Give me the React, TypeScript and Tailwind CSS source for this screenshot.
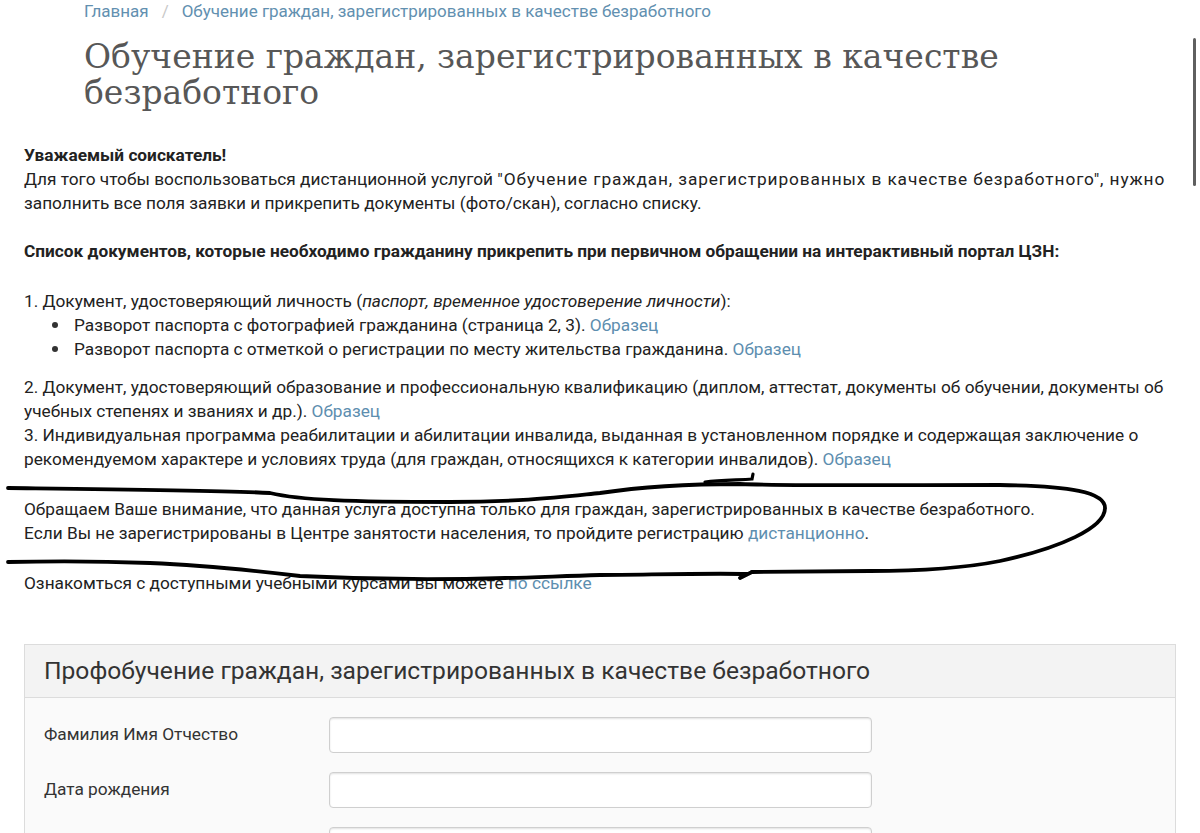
import React from "react";

const LINK = "text-[#5d8eaf]";

function Scribble() {
  return (
    <svg
      className="pointer-events-none absolute left-0 top-0"
      width={1200}
      height={833}
      viewBox="0 0 1200 833"
      fill="none"
    >
      <path
        d="M8 488 C 100 489 220 490 270 493 C 300 500 350 502 450 502 C 520 502 560 497 600 493 C 640 487 690 484 740 484 C 800 486 900 485 1000 485 C 1070 486 1105 492 1105 508 C 1105 528 1060 548 1000 561 C 960 569 920 571 870 571 L 752 572"
        stroke="#000"
        strokeWidth={3.8}
        strokeLinecap="round"
        strokeLinejoin="round"
      />
      <path
        d="M705 482 C 720 480 740 480 752 479 L 753 474"
        stroke="#000"
        strokeWidth={3.2}
        strokeLinecap="round"
      />
      <path
        d="M752 572 L 740 578 M 748 574 C 700 573 640 575 600 575 C 560 576 530 578 505 578 C 440 580 380 580 300 576 C 250 570 200 565 150 563 C 100 561 50 561 8 562"
        stroke="#000"
        strokeWidth={3.8}
        strokeLinecap="round"
        strokeLinejoin="round"
      />
    </svg>
  );
}

function FieldRow({ label }: { label: string }) {
  return (
    <div className="flex items-center">
      <label className="w-[285px] shrink-0 text-[17.3px] text-[#333]">{label}</label>
      <input
        type="text"
        className="h-[36px] w-[543px] rounded-[4px] border border-[#cfcfcf] bg-white shadow-[inset_0_1px_2px_rgba(0,0,0,0.12)]"
      />
    </div>
  );
}

function Bullet({ children }: { children: React.ReactNode }) {
  return (
    <li className="flex items-start">
      <span className="ml-[28px] mr-[16px] mt-[9px] h-[6px] w-[6px] shrink-0 rounded-full bg-[#333]" />
      <span>{children}</span>
    </li>
  );
}

export default function App() {
  return (
    <div
      className="relative h-[833px] w-[1200px] overflow-hidden bg-white text-[#222]"
      style={{ fontFamily: "Roboto, 'Liberation Sans', sans-serif" }}
    >
      <div className="pl-[84px]">
        <div className="flex items-center gap-[13px] text-[17px] leading-[22px] text-[#6290b0]">
          <span>Главная</span>
          <span className="text-[#c8c8c8]">/</span>
          <span>Обучение граждан, зарегистрированных в качестве безработного</span>
        </div>
        <h1
          className="mt-[17px] pr-[150px] text-[33px] leading-[36px] text-[#575757]"
          style={{ fontFamily: "'DejaVu Serif', serif" }}
        >
          Обучение граждан, зарегистрированных в качестве безработного
        </h1>
      </div>

      <div className="mt-[32px] px-[24px] text-[17.25px] leading-[24px]">
        <p>
          <b>Уважаемый соискатель!</b>
          <br />
          Для того чтобы воспользоваться дистанционной услугой{" "}
          <span className="tracking-[0.9px]">
            "Обучение граждан, зарегистрированных в качестве безработного", нужно
          </span>{" "}
          заполнить все поля заявки и прикрепить документы (фото/скан), согласно списку.
        </p>
        <p className="mt-[24px] font-bold">
          Список документов, которые необходимо гражданину прикрепить при первичном обращении на интерактивный портал ЦЗН:
        </p>
        <p className="mt-[26px]">
          1. Документ, удостоверяющий личность (<i>паспорт, временное удостоверение личности</i>):
        </p>
        <ul className="mb-[14px]">
          <Bullet>
            Разворот паспорта с фотографией гражданина (страница 2, 3). <span className={LINK}>Образец</span>
          </Bullet>
          <Bullet>
            Разворот паспорта с отметкой о регистрации по месту жительства гражданина.{" "}
            <span className={LINK}>Образец</span>
          </Bullet>
        </ul>
        <p>
          2. Документ, удостоверяющий образование и профессиональную квалификацию (диплом, аттестат, документы об
          обучении, документы об учебных степенях и званиях и др.). <span className={LINK}>Образец</span>
          <br />
          3. Индивидуальная программа реабилитации и абилитации инвалида, выданная в установленном порядке и
          содержащая заключение о рекомендуемом характере и условиях труда (для граждан, относящихся к категории
          инвалидов). <span className={LINK}>Образец</span>
        </p>
        <p className="mt-[26px]">
          Обращаем Ваше внимание, что данная услуга доступна только для граждан, зарегистрированных в качестве
          безработного.
          <br />
          Если Вы не зарегистрированы в Центре занятости населения, то пройдите регистрацию{" "}
          <span className={LINK}>дистанционно</span>.
        </p>
        <p className="mt-[26px]">
          Ознакомться с доступными учебными курсами вы можете <span className={LINK}>по ссылке</span>
        </p>
      </div>

      <div className="mx-[24px] mt-[49px] border border-[#dcdcdc] bg-[#fafafa]">
        <div className="flex h-[53px] items-center border-b border-[#dcdcdc] bg-[#f3f3f3] px-[19px] text-[24.6px] text-[#333]">
          Профобучение граждан, зарегистрированных в качестве безработного
        </div>
        <div className="flex flex-col gap-[19px] px-[19px] pt-[19px] pb-[20px]">
          <FieldRow label="Фамилия Имя Отчество" />
          <FieldRow label="Дата рождения" />
          <FieldRow label="" />
        </div>
      </div>

      <div className="absolute right-[4px] top-[38px] h-[148px] w-[3px] rounded-full bg-[#5f5f5f]" />
      <Scribble />
    </div>
  );
}
